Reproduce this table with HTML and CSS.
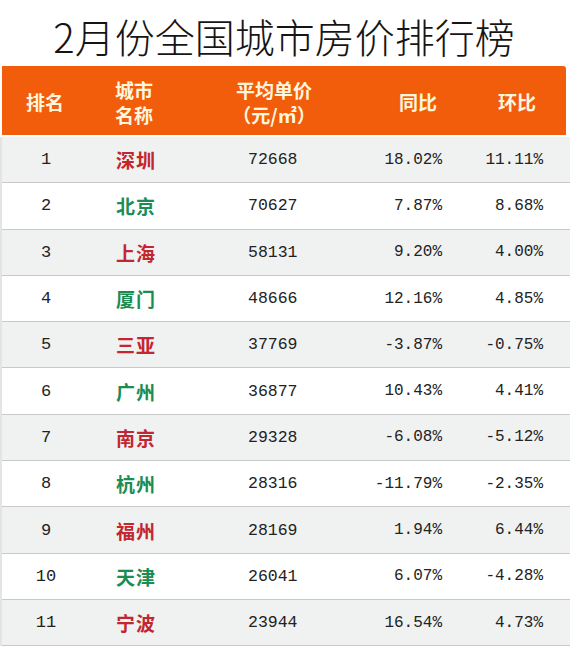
FILE: index.html
```html
<!DOCTYPE html>
<html lang="zh">
<head>
<meta charset="utf-8">
<link rel="stylesheet" href="styles.css">
</head>
<body>
<div class="page">
  <h1 class="title">2月份全国城市房价排行榜</h1>
  <div class="head">
    <div class="h-rank">排名</div>
    <div class="h-city">城市<br>名称</div>
    <div class="h-price">平均单价<br>（元/㎡）</div>
    <div class="h-yoy">同比</div>
    <div class="h-mom">环比</div>
  </div>
  <div class="rows">
    <div class="row"><span class="rank">1</span><span class="city red">深圳</span><span class="price">72668</span><span class="yoy">18.02%</span><span class="mom">11.11%</span></div>
    <div class="row"><span class="rank">2</span><span class="city green">北京</span><span class="price">70627</span><span class="yoy">7.87%</span><span class="mom">8.68%</span></div>
    <div class="row"><span class="rank">3</span><span class="city red">上海</span><span class="price">58131</span><span class="yoy">9.20%</span><span class="mom">4.00%</span></div>
    <div class="row"><span class="rank">4</span><span class="city green">厦门</span><span class="price">48666</span><span class="yoy">12.16%</span><span class="mom">4.85%</span></div>
    <div class="row"><span class="rank">5</span><span class="city red">三亚</span><span class="price">37769</span><span class="yoy">-3.87%</span><span class="mom">-0.75%</span></div>
    <div class="row"><span class="rank">6</span><span class="city green">广州</span><span class="price">36877</span><span class="yoy">10.43%</span><span class="mom">4.41%</span></div>
    <div class="row"><span class="rank">7</span><span class="city red">南京</span><span class="price">29328</span><span class="yoy">-6.08%</span><span class="mom">-5.12%</span></div>
    <div class="row"><span class="rank">8</span><span class="city green">杭州</span><span class="price">28316</span><span class="yoy">-11.79%</span><span class="mom">-2.35%</span></div>
    <div class="row"><span class="rank">9</span><span class="city red">福州</span><span class="price">28169</span><span class="yoy">1.94%</span><span class="mom">6.44%</span></div>
    <div class="row"><span class="rank">10</span><span class="city green">天津</span><span class="price">26041</span><span class="yoy">6.07%</span><span class="mom">-4.28%</span></div>
    <div class="row"><span class="rank">11</span><span class="city red">宁波</span><span class="price">23944</span><span class="yoy">16.54%</span><span class="mom">4.73%</span></div>
  </div>
</div>
</body>
</html>
```

FILE: styles.css
```css
* { box-sizing: border-box; }
html, body { margin: 0; padding: 0; background: #ffffff; }
.page {
  width: 570px;
  height: 647px;
  overflow: hidden;
  font-family: "Noto Sans CJK SC", sans-serif;
}
.title {
  margin: 0;
  height: 66px;
  padding-top: 12px;
  font-size: 40px;
  line-height: 48px;
  font-weight: 300;
  color: #151515;
  text-align: center;
  letter-spacing: 0;
  padding-right: 2px;
}
.head {
  margin: 0 4px 0 2px;
  height: 69px;
  background: #f25d0c;
  border-radius: 0 3px 0 0;
  display: grid;
  grid-template-columns: 86px 92px 188px 100px 98px;
  align-items: center;
  color: #fff6de;
  font-weight: 700;
  font-size: 19px;
  line-height: 25px;
  text-align: center;
  padding-top: 2px;
}
.rows {
  margin-top: 2px;
  border-left: 2px solid #e4e4e4;
}
.row {
  height: 46.3px;
  display: grid;
  grid-template-columns: 88px 92px 148px 112px 101px 27px;
  align-items: center;
  border-bottom: 1px solid #c9c9c9;
  font-family: "Liberation Mono", "Noto Sans CJK SC", monospace;
  font-size: 16px;
  color: #222222;
}
.row:nth-child(odd) { background: #f0f1f1; }
.row:nth-child(even) { background: #ffffff; }
.rank { text-align: center; font-size: 17px; }
.city {
  text-align: center;
  font-family: "Noto Sans CJK SC", sans-serif;
  font-weight: 700;
  font-size: 19px;
  letter-spacing: 1px;
}
.red { color: #c2262f; }
.green { color: #1b8c52; }
.price { padding-left: 66px; font-size: 16.5px; }
.yoy { text-align: right; }
.mom { text-align: right; }
```
